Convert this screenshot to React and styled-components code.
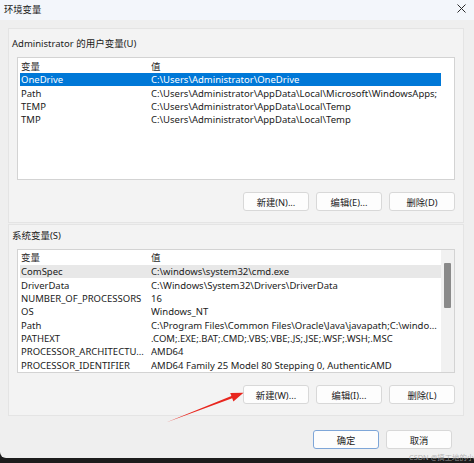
import styled, { createGlobalStyle } from 'styled-components'

const GlobalStyle = createGlobalStyle`
html, body {
margin: 0;
padding: 0;
background: #1c1c1c;
}
body {
font-family: "Noto Sans", "Noto Sans CJK SC", sans-serif;
font-size: 9.5px;
color: #1b1b1b;
}
`

const userVars = [
    { name: 'OneDrive', value: 'C:\\Users\\Administrator\\OneDrive' },
    { name: 'Path', value: 'C:\\Users\\Administrator\\AppData\\Local\\Microsoft\\WindowsApps;' },
    { name: 'TEMP', value: 'C:\\Users\\Administrator\\AppData\\Local\\Temp' },
    { name: 'TMP', value: 'C:\\Users\\Administrator\\AppData\\Local\\Temp' },
]

const sysVars = [
    { name: 'ComSpec', value: 'C:\\windows\\system32\\cmd.exe' },
    { name: 'DriverData', value: 'C:\\Windows\\System32\\Drivers\\DriverData' },
    { name: 'NUMBER_OF_PROCESSORS', value: '16' },
    { name: 'OS', value: 'Windows_NT' },
    { name: 'Path', value: 'C:\\Program Files\\Common Files\\Oracle\\Java\\javapath;C:\\windo...' },
    { name: 'PATHEXT', value: '.COM;.EXE;.BAT;.CMD;.VBS;.VBE;.JS;.JSE;.WSF;.WSH;.MSC' },
    { name: 'PROCESSOR_ARCHITECTU...', value: 'AMD64' },
    { name: 'PROCESSOR_IDENTIFIER', value: 'AMD64 Family 25 Model 80 Stepping 0, AuthenticAMD' },
]

const VarList = ({ rows, selected, hover, height, scroll }) => (
    <ListBox $height={height}>
        <ListMain>
            <HeaderRow>
                <NameCell>变量</NameCell>
                <ValueCell>值</ValueCell>
            </HeaderRow>
            {rows.map((r, i) => (
                <Row key={r.name + i} $selected={i === selected} $hover={i === hover}>
                    <NameCell>{r.name}</NameCell>
                    <ValueCell>{r.value}</ValueCell>
                </Row>
            ))}
        </ListMain>
        <ScrollTrack $show={scroll}>
            {scroll && <Thumb />}
        </ScrollTrack>
    </ListBox>
)

const App = () => {
    return (
        <Screen>
            <GlobalStyle />
            <Window>
                <TitleBar>
                    <Title>环境变量</Title>
                    <svg width="9" height="9" viewBox="0 0 9 9">
                        <path d="M0.5 0.5 L8.5 8.5 M8.5 0.5 L0.5 8.5" stroke="#2b2b2b" strokeWidth="1" />
                    </svg>
                </TitleBar>

                <Body>
                    <Group $top={8}>
                        <GroupLabel>Administrator 的用户变量(U)</GroupLabel>
                        <VarList rows={userVars} selected={0} height={123} />
                        <ButtonRow>
                            <Button>新建(N)...</Button>
                            <Button>编辑(E)...</Button>
                            <Button>删除(D)</Button>
                        </ButtonRow>
                    </Group>

                    <Group $top={4}>
                        <GroupLabel>系统变量(S)</GroupLabel>
                        <VarList rows={sysVars} hover={0} height={124} scroll />
                        <ButtonRow>
                            <Button>新建(W)...</Button>
                            <Button>编辑(I)...</Button>
                            <Button>删除(L)</Button>
                        </ButtonRow>
                    </Group>

                    <Footer>
                        <Button $primary>确定</Button>
                        <Button>取消</Button>
                    </Footer>
                </Body>

                <Arrow width="474" height="463" viewBox="0 0 474 463">
                    <polygon
                        points="166,422.4 231.4,396.1 230.2,392.9 243.5,392.8 233.4,401.4 232.2,398.3"
                        fill="#e8261e"
                    />
                </Arrow>
            </Window>
            <Watermark>CSDN @搞工地的小</Watermark>
        </Screen>
    )
}

export default App

const Screen = styled.div`
position: relative;
width: 474px;
height: 463px;
overflow: hidden;
background: #1c1c1c;
`

const Window = styled.div`
position: relative;
width: 474px;
height: 458px;
background: #efefef;
border-bottom-left-radius: 6px;
display: flex;
flex-direction: column;
`

const TitleBar = styled.div`
height: 20px;
box-sizing: border-box;
padding: 0 8px 3px 4px;
display: flex;
align-items: center;
justify-content: space-between;
background: #f3f6fb;
`

const Title = styled.span`
font-size: 9.3px;
color: #1a1a1a;
`

const Body = styled.div`
padding: 8px 10px 0 8px;
display: flex;
flex-direction: column;
gap: 1px;
`

const Group = styled.section`
border: 1px solid #e4e4e4;
background: #f3f3f3;
padding: ${p => p.$top}px 8px 11px 8px;
display: flex;
flex-direction: column;
`

const GroupLabel = styled.div`
height: 14px;
line-height: 14px;
margin: 0 0 6px -5px;
white-space: nowrap;
`

const ListBox = styled.div`
height: ${p => p.$height}px;
box-sizing: border-box;
border: 1px solid #d3d3d3;
background: #fff;
display: flex;
overflow: hidden;
`

const ListMain = styled.div`
flex: 1;
min-width: 0;
padding-left: 2px;
display: flex;
flex-direction: column;
`

const HeaderRow = styled.div`
height: 15px;
display: flex;
align-items: center;
color: #2a2a2a;
`

const Row = styled.div`
height: 13.4px;
display: flex;
align-items: center;
white-space: nowrap;
background: ${p => (p.$selected ? '#0078d7' : p.$hover ? '#e8e8e8' : 'transparent')};
color: ${p => (p.$selected ? '#fff' : '#1b1b1b')};
`

const NameCell = styled.div`
width: 131px;
flex-shrink: 0;
padding-left: 1px;
box-sizing: border-box;
overflow: hidden;
white-space: nowrap;
`

const ValueCell = styled.div`
flex: 1;
min-width: 0;
overflow: hidden;
white-space: nowrap;
`

const ScrollTrack = styled.div`
width: 13px;
flex-shrink: 0;
box-sizing: border-box;
padding: 13px 3px 0 3px;
background: ${p => (p.$show ? '#f1f1f1' : '#fff')};
`

const Thumb = styled.div`
height: 45px;
background: #8a8a8a;
border-radius: 1px;
`

const ButtonRow = styled.div`
display: flex;
justify-content: flex-end;
gap: 7px;
margin-top: 12px;
`

const Button = styled.button`
width: 66px;
height: 19px;
padding: 0;
box-sizing: border-box;
font-family: "Noto Sans", "Noto Sans CJK SC", sans-serif;
font-size: 9.3px;
color: #1b1b1b;
background: #fdfdfd;
border: 1px solid ${p => (p.$primary ? '#7ea6d8' : '#d8d8d8')};
border-radius: 3px;
`

const Footer = styled.div`
display: flex;
justify-content: flex-end;
gap: 7px;
margin-top: 13px;
padding-right: 12px;
`

const Arrow = styled.svg`
position: absolute;
left: 0;
top: 0;
pointer-events: none;
`

const Watermark = styled.div`
position: absolute;
left: 409px;
top: 451px;
font-size: 7.4px;
white-space: nowrap;
color: rgba(170, 170, 170, 0.85);
`
